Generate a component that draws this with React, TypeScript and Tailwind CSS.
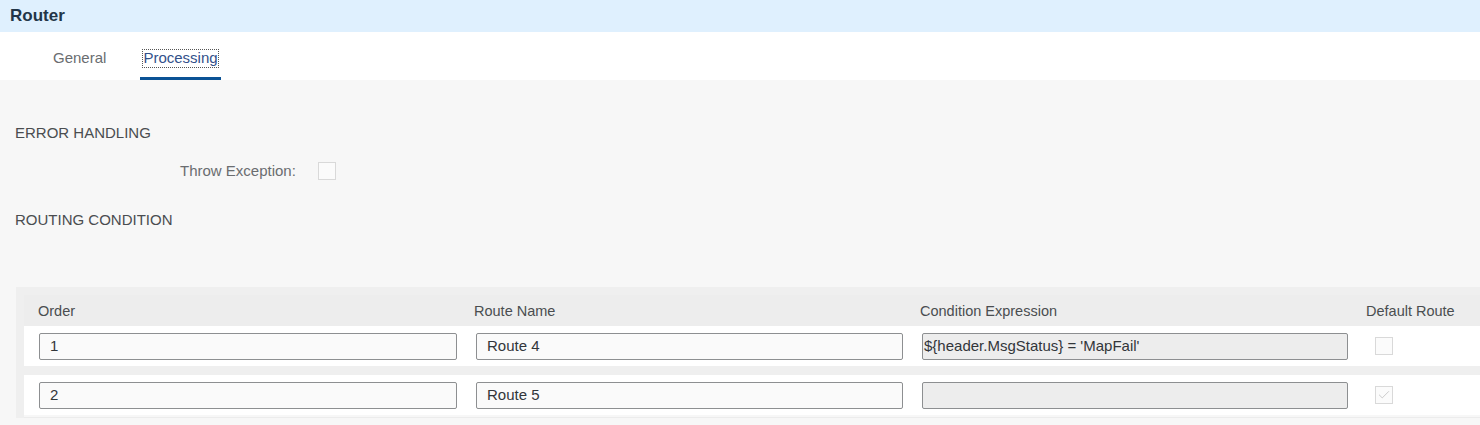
import { Check } from 'lucide-react';

const rows = [
  { order: '1', name: 'Route 4', expr: "${header.MsgStatus} = 'MapFail'", isDefault: false },
  { order: '2', name: 'Route 5', expr: '', isDefault: true },
];

const font = { fontFamily: '"Liberation Sans", Arial, sans-serif' };

function Box({ checked }: { checked?: boolean }) {
  return (
    <div className="w-[18px] h-[18px] border border-[#d9d9d9] bg-[#fbfbfb] flex items-center justify-center">
      {checked && <Check size={14} strokeWidth={1.5} className="text-[#c4c4c4]" />}
    </div>
  );
}

export default function App() {
  return (
    <div className="w-[1480px] h-[425px] bg-[#f7f7f7] overflow-hidden text-[#32363a]" style={font}>
      <div className="h-8 bg-[#dff0fe] flex items-center pl-[10px]">
        <span className="text-[17px] font-bold text-[#223548]">Router</span>
      </div>

      <div className="h-12 bg-white flex items-stretch pl-[53px] gap-[34px] text-[15px] pt-1">
        <div className="flex items-center text-[#6a6d70]">General</div>
        <div className="relative flex items-center px-[2px]">
          <span className="text-[#32508a] border border-dotted border-[#555] leading-4 pb-px">Processing</span>
          <div className="absolute left-0 right-0 bottom-0 h-[3px] bg-[#0b5295]" />
        </div>
      </div>

      <div className="pt-[43px] text-[15px] leading-5">
        <div className="pl-[15px] text-[#4a4d50]">ERROR HANDLING</div>
        <div className="flex items-center mt-[18px] pl-[180px] gap-[22px]">
          <span className="text-[#6a6d70]">Throw Exception:</span>
          <Box />
        </div>
        <div className="pl-[15px] mt-[29px] text-[#4a4d50]">ROUTING CONDITION</div>

        <div className="mt-[57px] ml-4 bg-[#efefef] pt-2 pl-2">
          <div className="grid grid-cols-[446px_446px_446px_1fr] h-[31px] bg-[#ededed] items-center text-[#4a4d50] text-[14.5px]">
            <div className="pl-[14px]">Order</div>
            <div className="pl-[4px]">Route Name</div>
            <div className="pl-[4px]">Condition Expression</div>
            <div className="pl-[4px]">Default Route</div>
          </div>
          {rows.map((r, i) => (
            <div
              key={r.order}
              className={`grid grid-cols-[446px_446px_446px_1fr] h-[40px] bg-white items-center ${i > 0 ? 'mt-[9px]' : ''}`}
            >
              <div className="pl-[15px] pr-[13px]">
                <div className="h-[27px] border border-[#8d8f91] rounded-[2px] bg-[#fafafa] flex items-center px-[10px] text-[#32363a]">
                  {r.order}
                </div>
              </div>
              <div className="pl-[6px] pr-[13px]">
                <div className="h-[27px] border border-[#8d8f91] rounded-[2px] bg-[#fafafa] flex items-center px-[10px] text-[#32363a]">
                  {r.name}
                </div>
              </div>
              <div className="pl-[6px] pr-[14px]">
                <div className="h-[27px] border border-[#8d8f91] rounded-[2px] bg-[#ededed] flex items-center px-[1px] text-[#32363a] whitespace-nowrap">
                  {r.expr}
                </div>
              </div>
              <div className="pl-[13px]">
                <Box checked={r.isDefault} />
              </div>
            </div>
          ))}
          <div className="h-[3px] bg-[#f7f7f7] border-b border-[#ececec]" />
        </div>
      </div>
    </div>
  );
}
